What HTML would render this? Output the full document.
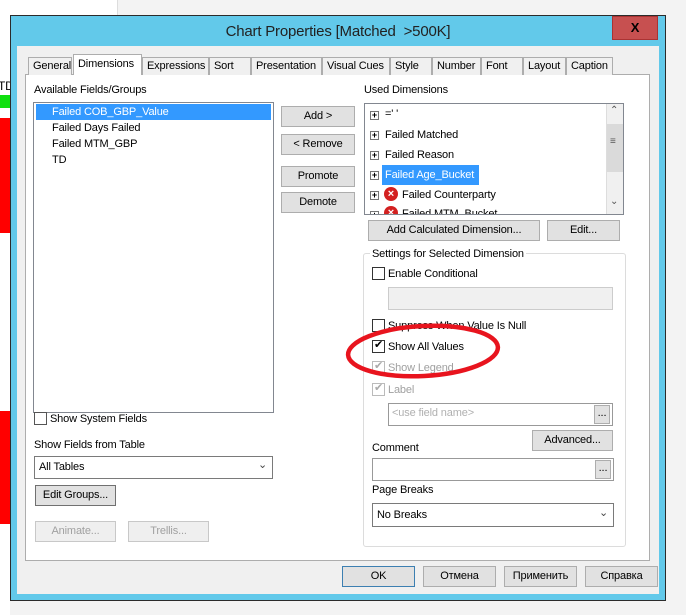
<!DOCTYPE html>
<html><head><meta charset="utf-8"><style>
*{margin:0;padding:0;box-sizing:border-box}
body{width:686px;height:614px;background:#f3f3f3;position:relative;overflow:hidden;font-family:"Liberation Sans",sans-serif;font-size:11px;letter-spacing:-0.15px;color:#000}
.a{position:absolute}
.btn{position:absolute;background:#e1e1e1;border:1px solid #adadad;text-align:center;font-size:11px;line-height:19px;white-space:nowrap}
.dis{color:#a0a0a0;border-color:#c8c8c8;background:#efefef}
.cb{position:absolute;width:13px;height:13px;border:1px solid #333;background:#fff}
.t{position:absolute;white-space:nowrap}
.tab{position:absolute;top:57px;height:18px;border:1px solid #adadad;border-bottom:none;background:#f0f0f0;padding-left:4px;line-height:16px;white-space:nowrap;overflow:hidden}
.pl{position:absolute;width:9px;height:9px;border:1px solid #777;background:#fff;font-size:9px;line-height:7px;text-align:center;font-weight:bold;letter-spacing:0}
.x{position:absolute;width:14px;height:14px;border-radius:50%;background:#d32020;color:#fff;font-size:11px;font-weight:bold;text-align:center;line-height:14px;letter-spacing:0}
</style></head><body>
<div class="a" style="left:0;top:0;width:118px;height:15px;background:#fff;border-right:1px solid #ddd"></div>
<div class="a" style="left:0;top:15px;width:10px;height:600px;background:#fff"></div>
<div class="t" style="left:-2px;top:79px;font-size:12px">TD</div>
<div class="a" style="left:0;top:95px;width:10px;height:13px;background:#10e010"></div>
<div class="a" style="left:0;top:118px;width:10px;height:115px;background:#ff0000"></div>
<div class="a" style="left:0;top:411px;width:10px;height:113px;background:#ff0000"></div>

<div class="a" style="left:10px;top:15px;width:656px;height:586px;background:#62c9ea;border:1px solid #2b2b2b"></div>
<div class="t" style="left:10px;top:23px;width:656px;text-align:center;font-size:15px;color:#222;letter-spacing:-0.2px">Chart Properties [Matched&nbsp; &gt;500K]</div>
<div class="a" style="left:612px;top:16px;width:46px;height:24px;background:#c75050;border:1px solid #a33;color:#000;font-weight:bold;text-align:center;line-height:22px;font-size:13px">X</div>
<div class="a" style="left:17px;top:46px;width:642px;height:548px;background:#f0f0f0"></div>

<div class="a" style="left:25px;top:74px;width:625px;height:487px;background:#fff;border:1px solid #adadad"></div>
<div class="tab" style="left:28px;width:44px">General</div>
<div class="tab" style="left:142px;width:67px">Expressions</div>
<div class="tab" style="left:209px;width:42px">Sort</div>
<div class="tab" style="left:251px;width:71px">Presentation</div>
<div class="tab" style="left:322px;width:68px">Visual Cues</div>
<div class="tab" style="left:390px;width:42px">Style</div>
<div class="tab" style="left:432px;width:49px">Number</div>
<div class="tab" style="left:481px;width:42px">Font</div>
<div class="tab" style="left:523px;width:43px">Layout</div>
<div class="tab" style="left:566px;width:47px">Caption</div>
<div class="tab" style="left:73px;top:54px;height:21px;width:69px;background:#fff;line-height:18px">Dimensions</div>

<div class="t" style="left:34px;top:84px">Available Fields/Groups</div>
<div class="a" style="left:33px;top:102px;width:241px;height:311px;background:#fff;border:1px solid #828790"></div>
<div class="a" style="left:36px;top:104px;width:235px;height:16px;background:#3399ff"></div>
<div class="t" style="left:52px;top:106px;color:#fff">Failed COB_GBP_Value</div>
<div class="t" style="left:52px;top:122px">Failed Days Failed</div>
<div class="t" style="left:52px;top:138px">Failed MTM_GBP</div>
<div class="t" style="left:52px;top:154px">TD</div>
<div class="cb" style="left:34px;top:412px;border-color:#555"></div>
<div class="t" style="left:50px;top:413px">Show System Fields</div>
<div class="t" style="left:34px;top:439px">Show Fields from Table</div>
<div class="a" style="left:34px;top:456px;width:239px;height:23px;background:#fff;border:1px solid #7a7a7a"></div>
<div class="t" style="left:39px;top:461px">All Tables</div>
<div class="t" style="left:258px;top:458px;font-size:11px;color:#444">&#8964;</div>
<div class="btn" style="left:35px;top:485px;width:81px;height:21px;border-color:#707070">Edit Groups...</div>
<div class="btn dis" style="left:35px;top:521px;width:81px;height:21px">Animate...</div>
<div class="btn dis" style="left:128px;top:521px;width:81px;height:21px">Trellis...</div>

<div class="btn" style="left:281px;top:106px;width:74px;height:21px">Add &gt;</div>
<div class="btn" style="left:281px;top:134px;width:74px;height:21px">&lt; Remove</div>
<div class="btn" style="left:281px;top:166px;width:74px;height:21px">Promote</div>
<div class="btn" style="left:281px;top:192px;width:74px;height:21px">Demote</div>

<div class="t" style="left:364px;top:84px">Used Dimensions</div>
<div class="a" style="left:364px;top:103px;width:260px;height:112px;background:#fff;border:1px solid #828790;overflow:hidden">
 <div class="a" style="left:241px;top:0;width:17px;height:110px;background:#f0f0f0;border-left:1px solid #ddd"></div>
 <div class="a" style="left:242px;top:20px;width:16px;height:48px;background:#dadada"></div>
 <div class="t" style="left:245px;top:1px;font-size:10px;color:#555">&#8963;</div>
 <div class="t" style="left:245px;top:32px;font-size:10px;color:#555">&#8801;</div>
 <div class="t" style="left:245px;top:92px;font-size:10px;color:#555">&#8964;</div>
 <div class="pl" style="left:5px;top:7px">+</div><div class="t" style="left:20px;top:4px">=' '</div>
 <div class="pl" style="left:5px;top:27px">+</div><div class="t" style="left:20px;top:25px">Failed Matched</div>
 <div class="pl" style="left:5px;top:47px">+</div><div class="t" style="left:20px;top:45px">Failed Reason</div>
 <div class="pl" style="left:5px;top:67px">+</div>
 <div class="a" style="left:17px;top:61px;width:97px;height:20px;background:#3399ff"></div><div class="t" style="left:20px;top:65px;color:#fff">Failed Age_Bucket</div>
 <div class="pl" style="left:5px;top:87px">+</div><div class="x" style="left:19px;top:83px">×</div><div class="t" style="left:37px;top:85px">Failed Counterparty</div>
 <div class="pl" style="left:5px;top:107px">+</div><div class="x" style="left:19px;top:102px">×</div><div class="t" style="left:37px;top:104px">Failed MTM_Bucket</div>
</div>
<div class="btn" style="left:368px;top:220px;width:172px;height:21px">Add Calculated Dimension...</div>
<div class="btn" style="left:547px;top:220px;width:73px;height:21px">Edit...</div>

<div class="a" style="left:363px;top:253px;width:263px;height:294px;border:1px solid #dcdcdc;border-radius:3px"></div>
<div class="t" style="left:370px;top:248px;background:#fff;padding:0 2px">Settings for Selected Dimension</div>
<div class="cb" style="left:372px;top:267px"></div><div class="t" style="left:388px;top:268px">Enable Conditional</div>
<div class="a" style="left:388px;top:287px;width:225px;height:23px;background:#f0f0f0;border:1px solid #ccc"></div>
<div class="cb" style="left:372px;top:319px"></div><div class="t" style="left:388px;top:320px">Suppress When Value Is Null</div>
<div class="cb" style="left:372px;top:340px"></div><div class="t" style="left:374px;top:338px;font-size:11px">&#10004;</div><div class="t" style="left:388px;top:341px">Show All Values</div>
<div class="cb" style="left:372px;top:361px;border-color:#bbb"></div><div class="t" style="left:374px;top:359px;color:#aaa">&#10004;</div><div class="t" style="left:388px;top:362px;color:#a0a0a0">Show Legend</div>
<div class="cb" style="left:372px;top:383px;border-color:#bbb"></div><div class="t" style="left:374px;top:381px;color:#aaa">&#10004;</div><div class="t" style="left:388px;top:384px;color:#a0a0a0">Label</div>
<div class="a" style="left:388px;top:403px;width:225px;height:23px;background:#fff;border:1px solid #999"></div>
<div class="t" style="left:392px;top:407px;color:#b0b0b0">&lt;use field name&gt;</div>
<div class="btn" style="left:594px;top:405px;width:16px;height:19px;line-height:14px">...</div>
<div class="btn" style="left:532px;top:430px;width:81px;height:21px">Advanced...</div>
<div class="t" style="left:372px;top:442px">Comment</div>
<div class="a" style="left:372px;top:458px;width:242px;height:23px;background:#fff;border:1px solid #999"></div>
<div class="btn" style="left:595px;top:460px;width:16px;height:19px;line-height:14px">...</div>
<div class="t" style="left:372px;top:484px">Page Breaks</div>
<div class="a" style="left:372px;top:503px;width:242px;height:24px;background:#fff;border:1px solid #7a7a7a"></div>
<div class="t" style="left:377px;top:509px">No Breaks</div>
<div class="t" style="left:599px;top:506px;font-size:11px;color:#444">&#8964;</div>

<svg class="a" style="left:340px;top:318px" width="170" height="68"><ellipse cx="83" cy="33" rx="75" ry="25" fill="none" stroke="#e8141e" stroke-width="4.5" transform="rotate(-3 83 33)"/></svg>

<div class="btn" style="left:342px;top:566px;width:73px;height:21px;border-color:#3c7fb1">OK</div>
<div class="btn" style="left:423px;top:566px;width:73px;height:21px">Отмена</div>
<div class="btn" style="left:504px;top:566px;width:73px;height:21px">Применить</div>
<div class="btn" style="left:585px;top:566px;width:73px;height:21px">Справка</div>
</body></html>
